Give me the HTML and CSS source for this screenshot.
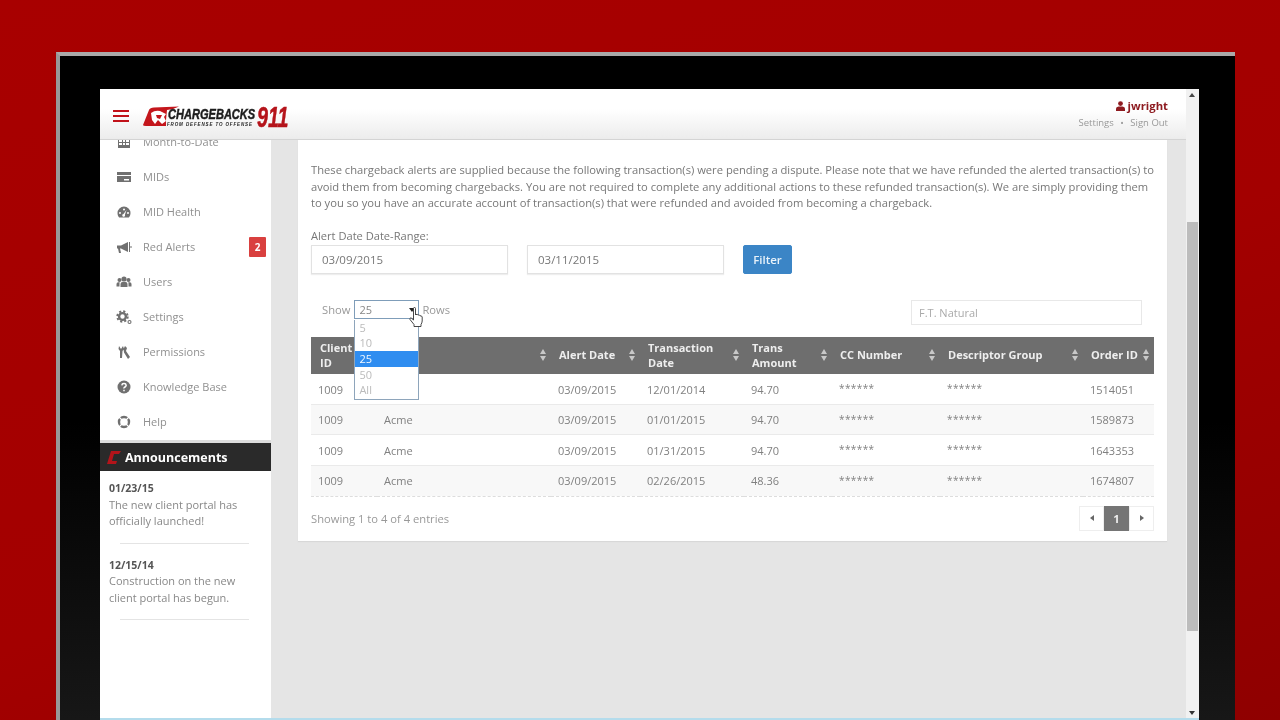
FILE: index.html
```html
<!DOCTYPE html>
<html lang="en">
<head>
<meta charset="utf-8">
<title>Chargebacks911 - Red Alerts</title>
<link rel="stylesheet" href="styles.css">
</head>
<body>
<div class="frame">
  <div class="screen">
    <div class="app">
      <header class="topbar">
        <div class="burger"><i></i><i></i><i></i></div>
        <svg class="logo" width="150" height="26" viewBox="0 0 150 26">
          <path d="M1 22 L7 7 Q8 4.500 12 4.500 L37 3.500 L31 6 L25 7 L24 17 L24 23 L4 23 Q1 23 1 22 Z" fill="#c4161c"/>
          <path d="M9 10 Q13 7 18 8 L24 11 L22 14 L24 18 L20 21 L16 17 L13 21 L10 17 Z" fill="#fff"/>
          <path d="M14 12 L20 12 L18 16 L15 15 Z" fill="#c4161c"/>
          <text transform="translate(26 15.500) scale(.79 1)" class="logo-main">CHARGEBACKS</text>
          <text x="25" y="23" class="logo-sub" textLength="85" lengthAdjust="spacing">FROM DEFENSE TO OFFENSE</text>
          <text transform="translate(115 24) scale(.68 1)" class="logo-num">911</text>
        </svg>
        <div class="user">
          <div class="user-name">
            <svg width="9" height="10" viewBox="0 0 9 10"><circle cx="4.500" cy="2.600" r="2.400"/><path d="M0 10 V7.500 Q0 5.600 2.500 5.400 H6.500 Q9 5.600 9 7.500 V10 Z"/></svg>
            jwright
          </div>
          <div class="user-links">Settings <span class="dot">•</span> Sign Out</div>
        </div>
      </header>
      <div class="body">
        <aside class="sidebar">
          <ul class="nav">
            <li><svg viewBox="0 0 16 16"><path d="M2 3h12v11H2z M3 6v2h3V6z M7 6v2h2V6z M10 6v2h3V6z M3 9v2h3V9z M7 9v2h2V9z M10 9v2h3V9z" fill-rule="evenodd"/></svg>Month-to-Date</li>
            <li><svg viewBox="0 0 16 16"><path d="M1 3h14v3H1z M1 7h14v6H1z M8 10v1.500h5V10z" fill-rule="evenodd"/></svg>MIDs</li>
            <li><svg viewBox="0 0 16 16"><path d="M8 2.500a6.500 6.500 0 0 0-6.500 6.500c0 1.700.6 3.200 1.600 4.500h9.800c1-1.300 1.600-2.800 1.600-4.500A6.500 6.500 0 0 0 8 2.500z M4 8a1 1 0 1 0 0 2 1 1 0 0 0 0-2z M8 4.500a1 1 0 1 0 0 2 1 1 0 0 0 0-2z M12 8a1 1 0 1 0 0 2 1 1 0 0 0 0-2z M10.500 6 L7.500 10a1.400 1.400 0 1 0 1.400.8z" fill-rule="evenodd"/></svg>MID Health</li>
            <li><svg viewBox="0 0 16 16"><path d="M1 6.500h4L12 3v10L5 9.500H4l1 4.500H3L2 9.500H1z M13 3h1v10h-1z M14.500 7h1v2h-1z"/></svg>Red Alerts<span class="badge">2</span></li>
            <li><svg viewBox="0 0 16 16"><circle cx="8" cy="5" r="2.600"/><circle cx="3.500" cy="6" r="2"/><circle cx="12.500" cy="6" r="2"/><path d="M4.500 13V10q0-2 2-2h3q2 0 2 2v3z M0.500 12.500V10q0-1.800 1.800-1.800h1.500q-.3.800-.3 1.800v2.500z M15.500 12.500V10q0-1.800-1.800-1.800h-1.500q.3.800.3 1.800v2.500z"/></svg>Users</li>
            <li><svg viewBox="0 0 16 16"><circle cx="6.500" cy="7.500" r="3.400" fill="none" stroke="#707070" stroke-width="2.400"/><circle cx="6.500" cy="7.500" r="5.200" fill="none" stroke="#707070" stroke-width="2" stroke-dasharray="2.100 2"/><circle cx="13.500" cy="13" r="1.500" fill="none" stroke="#707070" stroke-width="1.100"/></svg>Settings</li>
            <li><svg viewBox="0 0 16 16"><path d="M3 2 L5 5 L7 2 L8 5 L6.500 7 L6 14 L4 14 L4 7 L2.500 5z M9 2 L11 4 L10 7 L14 13 L12 15 L8 8.500 L7.500 5z"/></svg>Permissions</li>
            <li><svg viewBox="0 0 16 16"><circle cx="8" cy="8" r="6.500"/><path d="M5.800 6.300Q6 4.500 8 4.500T10.200 6.300Q10.200 7.300 9 8T8 9.500 M8 10.800V12.200" fill="none" stroke="#fff" stroke-width="1.500"/></svg>Knowledge Base</li>
            <li><svg viewBox="0 0 16 16"><circle cx="8" cy="8" r="5" fill="none" stroke="#707070" stroke-width="2.400"/><path d="M3 3l3 3 M13 3l-3 3 M3 13l3-3 M13 13l-3-3" stroke="#fff" stroke-width="1.200"/></svg>Help</li>
          </ul>
          <h2 class="ann-title"><svg width="14" height="15" viewBox="0 0 14 15"><path d="M4 1H14L12 4H7L5 11H10L9 14H0z" fill="#b3141a"/></svg>Announcements</h2>
          <article class="ann">
            <b>01/23/15</b>
            <p>The new client portal has officially launched!</p>
          </article>
          <article class="ann">
            <b>12/15/14</b>
            <p>Construction on the new client portal has begun.</p>
          </article>
        </aside>
        <main class="main">
          <section class="card">
            <p class="intro">These chargeback alerts are supplied because the following transaction(s) were pending a dispute. Please note that we have refunded the alerted transaction(s) to avoid them from becoming chargebacks. You are not required to complete any additional actions to these refunded transaction(s). We are simply providing them to you so you have an accurate account of transaction(s) that were refunded and avoided from becoming a chargeback.</p>
            <label class="range-label">Alert Date Date-Range:</label>
            <div class="range">
              <div class="input date">03/09/2015</div>
              <div class="input date">03/11/2015</div>
              <button class="btn">Filter</button>
            </div>
            <div class="controls">
              <div class="show">
                <span>Show</span>
                <div class="select">
                  25<span class="caret"></span>
                  <ul class="options">
                    <li>5</li><li>10</li><li class="sel">25</li><li>50</li><li>All</li>
                  </ul>
                  <svg class="hand" width="15" height="20" viewBox="0 0 15 20"><path d="M4.500 1.500Q4.500.5 5.500.5T6.500 1.500V8L7 7.500Q8.500 7 9 8 10.500 7.500 11 8.800 12.800 8.500 13.200 10V14Q13 16 12 17.500V19.500H5V17.500L1 12.500Q.5 11 2 10.800L4.500 13z" fill="#fff" stroke="#333" stroke-width=".9"/></svg>
                </div>
                <span>Rows</span>
              </div>
              <div class="input search">F.T. Natural</div>
            </div>
            <table class="grid">
              <colgroup><col class="c1"><col class="c2"><col class="c3"><col class="c4"><col class="c5"><col class="c6"><col class="c7"><col class="c8"></colgroup>
              <thead>
                <tr>
                  <th class="first"><div class="th">Client<br>ID<span class="sort"></span></div></th>
                  <th><div class="th"><span></span><span class="sort"></span></div></th>
                  <th><div class="th">Alert Date<span class="sort"></span></div></th>
                  <th><div class="th">Transaction<br>Date<span class="sort"></span></div></th>
                  <th><div class="th">Trans<br>Amount<span class="sort"></span></div></th>
                  <th><div class="th">CC Number<span class="sort"></span></div></th>
                  <th><div class="th">Descriptor Group<span class="sort"></span></div></th>
                  <th><div class="th">Order ID<span class="sort"></span></div></th>
                </tr>
              </thead>
              <tbody>
                <tr><td>1009</td><td>Acme</td><td>03/09/2015</td><td>12/01/2014</td><td>94.70</td><td class="mask">******</td><td class="mask">******</td><td>1514051</td></tr>
                <tr><td>1009</td><td>Acme</td><td>03/09/2015</td><td>01/01/2015</td><td>94.70</td><td class="mask">******</td><td class="mask">******</td><td>1589873</td></tr>
                <tr><td>1009</td><td>Acme</td><td>03/09/2015</td><td>01/31/2015</td><td>94.70</td><td class="mask">******</td><td class="mask">******</td><td>1643353</td></tr>
                <tr><td>1009</td><td>Acme</td><td>03/09/2015</td><td>02/26/2015</td><td>48.36</td><td class="mask">******</td><td class="mask">******</td><td>1674807</td></tr>
              </tbody>
            </table>
            <div class="foot">
              <span>Showing 1 to 4 of 4 entries</span>
              <div class="pager">
                <span class="pg"><i class="tri-l"></i></span>
                <span class="pg on">1</span>
                <span class="pg"><i class="tri-r"></i></span>
              </div>
            </div>
          </section>
        </main>
      </div>
    </div>
    <div class="scroll">
      <i class="arr-up"></i>
      <div class="thumb"></div>
      <i class="arr-down"></i>
    </div>
  </div>
</div>
</body>
</html>
```
FILE: styles.css
```css
* { box-sizing: border-box; }
html, body { margin: 0; height: 720px; overflow: hidden; }
body {
  background: linear-gradient(160deg, #a80000 0%, #a30000 55%, #8f0000 100%);
  font-family: "Open Sans", "Liberation Sans", sans-serif;
  color: #777;
  font-size: 11px;
  padding: 52px 45px 0 56px;
}
ul { list-style: none; margin: 0; padding: 0; }
p { margin: 0; }

.frame {
  height: 668px;
  border-top: 4px solid #a9a9a9;
  border-left: 4px solid #989898;
  background: linear-gradient(180deg, #000 0%, #000 55%, #171717 100%);
  padding: 33px 36px 0 40px;
  filter: blur(.35px);
}
.screen {
  height: 631px;
  display: flex;
  border-bottom: 2px solid #b4dcec;
  background: #fff;
}
.app { width: 1086px; display: flex; flex-direction: column; }

.topbar {
  height: 51px;
  flex: none;
  display: flex;
  align-items: center;
  padding: 0 18px 0 13px;
  background: linear-gradient(180deg, #fff 0%, #fff 40%, #ececec 100%);
  border-bottom: 1px solid #d4d4d4;
}
.burger { width: 16px; display: flex; flex-direction: column; gap: 3px; margin-top: 4px; }
.burger i { display: block; height: 2px; background: #c1121a; }
.logo { margin-left: 13px; margin-top: 3px; }
.logo-main { font: italic 700 14px "Liberation Sans", sans-serif; fill: #1c1c1c; stroke: #1c1c1c; stroke-width: .45px; }
.logo-sub { font: italic 700 4.500px "Liberation Sans", sans-serif; fill: #222; }
.logo-num { font: italic 700 29px "Liberation Sans", sans-serif; fill: #b5141b; stroke: #b5141b; stroke-width: .5px; }
.user { margin-left: auto; align-self: flex-start; padding-top: 9px; text-align: right; }
.user-name { font-weight: 700; font-size: 11.300px; color: #8e1b20; line-height: 16px; }
.user-name svg { fill: #8e1b20; vertical-align: -1px; }
.user-links { font-size: 9.500px; color: #999; line-height: 17px; }
.dot { margin: 0 4px; }

.body { flex: 1; display: flex; min-height: 0; background: #e5e5e5; }
.sidebar { width: 171px; flex: none; background: #fff; overflow: hidden; }
.nav { margin-top: -16px; height: 316px; }
.nav li {
  height: 35px;
  display: flex;
  align-items: center;
  padding-left: 16px;
  font-size: 11px;
  color: #909090;
}
.nav svg { width: 16px; height: 16px; fill: #707070; margin-right: 11px; flex: none; }
.badge {
  margin-left: auto;
  margin-right: 5px;
  width: 17px;
  height: 20px;
  background: #d9403f;
  color: #fff;
  font-weight: 700;
  font-size: 10px;
  line-height: 20px;
  text-align: center;
  border-radius: 1px;
}
.ann-title {
  margin: 0 0 9px;
  height: 31px;
  background: #2a2a2a;
  border-top: 3px solid #dcdcdc;
  color: #fff;
  font-size: 12.500px;
  font-weight: 700;
  display: flex;
  align-items: center;
  padding-left: 7px;
}
.ann-title svg { margin-right: 4px; }
.ann { padding: 0 8px 0 9px; line-height: 16.500px; color: #888; font-size: 11px; }
.ann b { display: block; color: #555; font-weight: 700; font-size: 10.500px; }
.ann::after { content: ""; display: block; height: 1px; margin: 13px 14px 13px 11px; background: #e4e4e4; }

.main { flex: 1; padding: 0 19px 0 27px; }
.card { background: #fff; height: 401px; padding: 22px 13px 0; box-shadow: 0 1px 1px #d8d8d8; }
.intro { line-height: 16.500px; font-size: 11.200px; color: #777; }
.range-label { display: block; margin-top: 16px; line-height: 16px; color: #777; font-size: 11.100px; }
.range { display: flex; margin-top: 1px; }
.input { border: 1px solid #e2e2e2; background: #fff; }
.date { height: 29px; width: 197px; line-height: 27px; padding-left: 10px; margin-right: 19px; font-size: 11.500px; box-shadow: 0 1px 1px #eee; }
.btn {
  width: 49px;
  height: 29px;
  background: #3b85c6;
  border: 1px solid #3b85c6;
  border-radius: 2px;
  color: #e8f2fa;
  font: 600 11.500px "Open Sans", sans-serif;
}
.controls { display: flex; justify-content: space-between; margin-top: 26px; padding: 0 12px 0 11px; height: 37px; }
.show { display: flex; align-items: flex-start; gap: 3px; line-height: 19px; color: #999; font-size: 11.200px; }
.select {
  position: relative;
  width: 65px;
  height: 19px;
  margin-left: 1px;
  border: 1px solid #7f9db9;
  padding-left: 4px;
  font-size: 11px;
  line-height: 17px;
  color: #888;
  background: #fff;
}
.caret { position: absolute; right: 3px; top: 7px; border: 3.500px solid transparent; border-top: 4px solid #222; border-bottom: 0; }
.options {
  position: absolute;
  z-index: 2;
  left: -1px;
  top: 19px;
  width: 65px;
  height: 80px;
  background: #fff;
  border: 1px solid #8ea5bb;
  border-top: 0;
}
.options li { height: 15.700px; line-height: 15.700px; padding-left: 4px; color: #bbb; font-size: 11px; }
.options .sel { background: #2f8df0; color: #f2f8ff; }
.hand { position: absolute; z-index: 3; left: 54px; top: 6px; }
.search { width: 231px; height: 25px; line-height: 24px; padding-left: 7px; color: #aaa; font-size: 11px; border-color: #e8e8e8; }

.grid { width: 843px; table-layout: fixed; border-collapse: collapse; }
.c1 { width: 66px; } .c2 { width: 174px; } .c3 { width: 89px; } .c4 { width: 104px; }
.c5 { width: 88px; } .c6 { width: 108px; } .c7 { width: 143px; } .c8 { width: 71px; }
.grid thead tr { background: #6e6e6e; height: 37px; }
.grid th { padding: 0 4px 0 8px; color: #eee; font-size: 11px; font-weight: 700; text-align: left; line-height: 15.500px; }
.grid th.first { padding-left: 9px; }
.th { position: relative; padding-right: 10px; min-height: 16px; }
.sort { position: absolute; right: 0; top: 50%; margin-top: -6px; width: 7px; height: 12px; }
.sort::before, .sort::after { content: ""; position: absolute; left: 0; border: 3.500px solid transparent; }
.sort::before { top: 0; border-top: 0; border-bottom: 5px solid #c8c8c8; }
.sort::after { bottom: 0; border-bottom: 0; border-top: 5px solid #c8c8c8; }
.grid td { height: 30.700px; padding: 0 0 0 7px; font-size: 11px; color: #808080; border-bottom: 1px solid #eaeaea; }
.grid tbody tr:first-child td:not(.mask) { padding-top: 1px; }
.grid tbody tr:nth-child(even) { background: #f8f8f8; }
.grid tbody tr:last-child td { border-bottom: 1px dashed #ddd; }
.grid .mask { vertical-align: top; padding-top: 7px; font-size: 10px; letter-spacing: .4px; }

.foot { display: flex; justify-content: space-between; align-items: center; margin-top: 9px; height: 25px; color: #999; font-size: 11.200px; }
.pager { display: flex; height: 25px; }
.pg { width: 25px; display: flex; align-items: center; justify-content: center; border: 1px solid #eee; }
.on { background: #757575; border-color: #757575; color: #eee; font-weight: 700; }
.tri-l { border: 3px solid transparent; border-right: 4px solid #666; border-left: 0; }
.tri-r { border: 3px solid transparent; border-left: 4px solid #666; border-right: 0; }

.scroll { width: 13px; flex: none; background: #f1f1f1; position: relative; }
.thumb { position: absolute; left: 1px; right: 1px; top: 133px; height: 409px; background: #bcbcbc; }
.arr-up, .arr-down { position: absolute; left: 3px; border: 3.500px solid transparent; }
.arr-up { top: 4px; border-top: 0; border-bottom: 4px solid #444; }
.arr-down { bottom: 3px; border-bottom: 0; border-top: 4px solid #333; }
```
